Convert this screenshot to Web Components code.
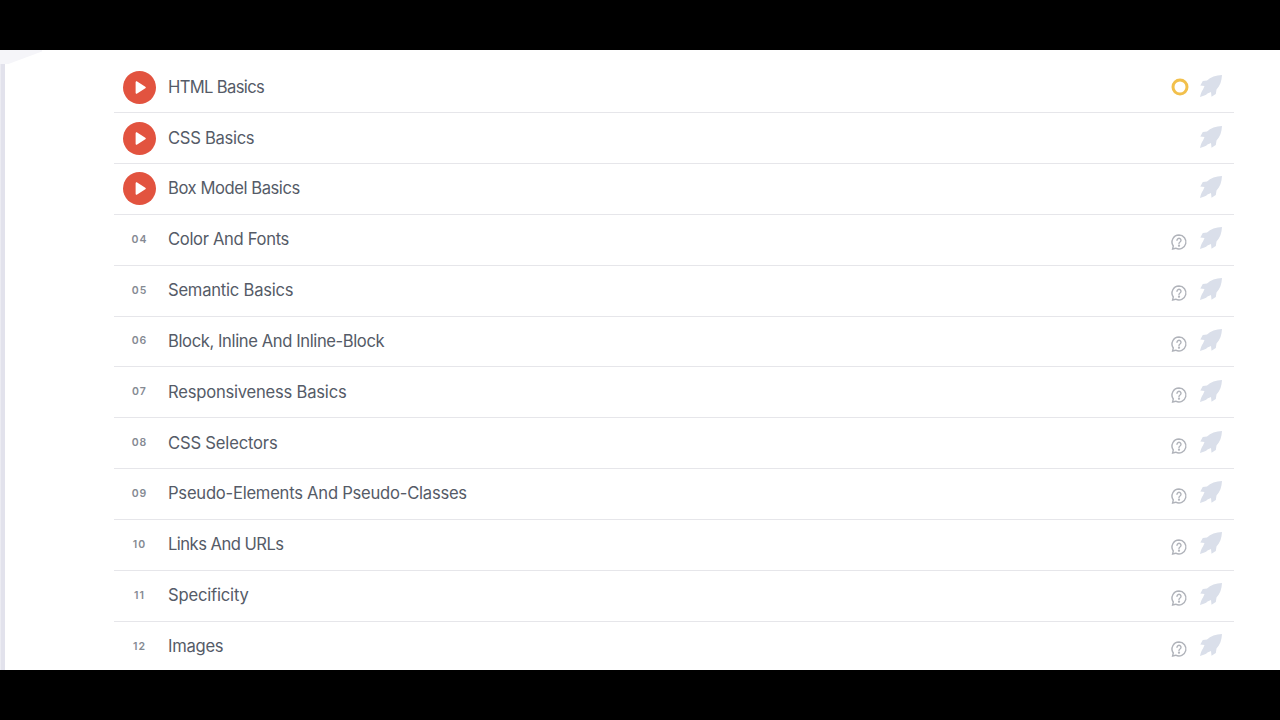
<!DOCTYPE html>
<html><head><meta charset="utf-8"><style>
html,body{margin:0;height:720px;overflow:hidden;background:#000}
</style></head><body>
<lesson-page>
<lesson-row kind="play" status="ring" ls="-.65" title="HTML Basics"></lesson-row>
<lesson-row kind="play" status="none" ls="-.3" title="CSS Basics"></lesson-row>
<lesson-row kind="play" status="none" ls="-.44" title="Box Model Basics"></lesson-row>
<lesson-row num="04" status="q" ls="-.33" title="Color And Fonts"></lesson-row>
<lesson-row num="05" status="q" ls="-.23" title="Semantic Basics"></lesson-row>
<lesson-row num="06" status="q" ls="-.4" title="Block, Inline And Inline-Block"></lesson-row>
<lesson-row num="07" status="q" ls="-.22" title="Responsiveness Basics"></lesson-row>
<lesson-row num="08" status="q" ls="-.18" title="CSS Selectors"></lesson-row>
<lesson-row num="09" status="q" ls="-.24" title="Pseudo-Elements And Pseudo-Classes"></lesson-row>
<lesson-row num="10" status="q" ls="-.53" title="Links And URLs"></lesson-row>
<lesson-row num="11" status="q" ls="-.19" title="Specificity"></lesson-row>
<lesson-row num="12" status="q" ls="-.27" title="Images"></lesson-row>
</lesson-page>
<script>
class LessonPage extends HTMLElement{
constructor(){super();this.attachShadow({mode:'open'}).innerHTML=`<style>
:host{display:block;width:1280px;height:720px;background:#000;padding:50px 0;box-sizing:border-box}
.main{height:620px;background:#fff;display:flex;overflow:hidden;position:relative}
.rail{width:5px;background:linear-gradient(90deg,#f1f1f6 0,#e2e2ec 30%,#e2e2ec 100%);margin-top:14px;flex:none}
.corner{position:absolute;left:0;top:0;width:42px;height:14px;background:#f5f5f9;clip-path:polygon(0 0,100% 0,100% 10%,20% 100%,0 100%)}
.list{margin-left:109px;width:1119.500px;padding-top:12.3px;flex:none}
</style><div class="main"><div class="corner"></div><div class="rail"></div><div class="list"><slot></slot></div></div>`}
}
class LessonRow extends HTMLElement{
constructor(){super();this.attachShadow({mode:'open'})}
connectedCallback(){
const play=this.getAttribute('kind')==='play',st=this.getAttribute('status');
const lead=play?`<svg width="33" height="33" viewBox="0 0 34 34"><circle cx="17" cy="17" r="17" fill="#e2533f"/><path d="M13 11.600c0-.9.9-1.400 1.600-.9l8.400 5.400c.7.4.7 1.400 0 1.800l-8.400 5.400c-.7.5-1.600 0-1.600-.9z" fill="#fff"/></svg>`:`<span class="num">${this.getAttribute('num')}</span>`;
const mark=st==='ring'?`<svg class="st ring" width="18" height="18" viewBox="0 0 18 18"><circle cx="9" cy="9" r="7" fill="none" stroke="#f2c04c" stroke-width="3"/></svg>`:
st==='q'?`<svg class="st q" width="18" height="18" viewBox="0 0 18 18" fill="none" stroke="#b0b3ba" stroke-width="1.400"><path d="M9 2a7 7 0 1 1-3.300 13.200L2.600 16l.7-3A7 7 0 0 1 9 2z"/><path d="M7 7.200a2 2 0 1 1 3 1.800c-.7.4-1 .8-1 1.500" stroke-linecap="round"/><circle cx="9" cy="12.700" r=".45" fill="#b0b3ba"/></svg>`:'';
this.shadowRoot.innerHTML=`<style>
:host{display:block;height:50.85px;box-sizing:border-box;border-bottom:1px solid #e6e6ea}
.row{display:flex;align-items:center;height:100%;padding:0 11.500px 0 9px;font-family:Inter,"Open Sans",sans-serif;color:#555b67}
.lead{width:33px;display:flex;justify-content:center;margin-right:12px;flex:none}
svg{display:block}
.num{font-size:10.500px;font-weight:600;letter-spacing:1px;color:#858a93;margin-bottom:1px}
.t{font-size:16.600px;flex:1;font-weight:400;white-space:nowrap;padding-bottom:1px;letter-spacing:${this.getAttribute('ls')}px}
.ring{margin-right:11.5px}.q{margin:5px 12px 0 0}
.rk{margin-top:-3px;filter:blur(.5px)}
</style><div class="row"><span class="lead">${lead}</span><span class="t">${this.getAttribute('title')}</span>${mark}
<svg class="rk" width="22" height="22" viewBox="0 0 22 22"><path fill="#dadfea" d="M22 0C16 .3 10.500 2 7 5.500L2.800 6 .3 10.500 4.500 11 3 14.500C1.500 16 .8 19 0 22c3-.8 6-1.800 7.500-3.500L11 17l.5 4.700 4.300-2.700.7-4.500C20 11 21.700 6 22 0z"/></svg></div>`;
}}
customElements.define('lesson-page',LessonPage);
customElements.define('lesson-row',LessonRow);
</script></body></html>
